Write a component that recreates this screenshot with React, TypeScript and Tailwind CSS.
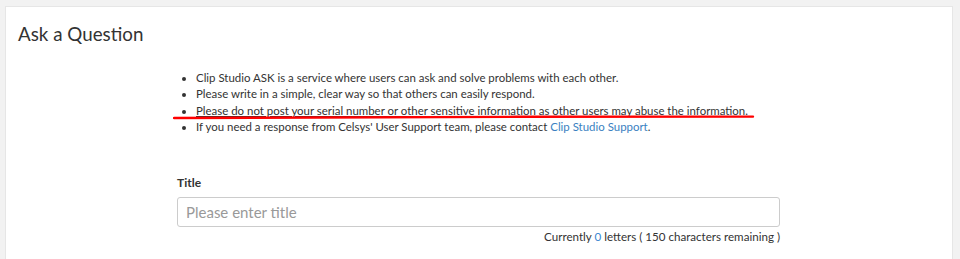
import React from 'react';

const items = [
  'Clip Studio ASK is a service where users can ask and solve problems with each other.',
  'Please write in a simple, clear way so that others can easily respond.',
];

export default function App() {
  return (
    <div className="min-h-[259px] bg-[#f2f2f2] pt-[6px] pl-[5px] pr-[7px] font-['Lato','Liberation_Sans',sans-serif] text-[#333]">
      <div className="h-[253px] border border-b-0 border-[#e6e6e6] bg-white pt-[14px] pl-[12px]">
        <h1 className="text-[18.8px] leading-[26px] text-[#333]">Ask a Question</h1>

        <div className="ml-[159px] mt-[23px] w-[603px]">
          <div className="relative">
            <ul className="list-disc pl-[19px] text-[11.45px] leading-[16.3px]">
              {items.map(t => (
                <li key={t}>{t}</li>
              ))}
              <li className="underline">
                Please do not post your serial number or other sensitive information as other users may abuse the information.
              </li>
              <li>
                If you need a response from Celsys' User Support team, please contact{' '}
                <a href="#" className="text-[#3a7fc1]">Clip Studio Support</a>.
              </li>
            </ul>
            <svg className="absolute left-[-4px] top-[44px]" width="582" height="6" viewBox="0 0 582 6">
              <path d="M1 4 C 120 3.4, 400 2.4, 580 2.6" stroke="#f00" strokeWidth="2.4" fill="none" strokeLinecap="round" />
            </svg>
          </div>

          <div className="mt-[40px]">
            <label className="block text-[12px] font-bold leading-[16px] text-[#333]">Title</label>
            <input
              type="text"
              placeholder="Please enter title"
              className="mt-[6px] h-[30px] w-full rounded-[3px] border border-[#ccc] px-[8px] text-[15px] text-[#333] outline-none placeholder:text-[#999]"
            />
            <p className="mt-[2px] text-right text-[11.6px] leading-[16px]">
              Currently <span className="text-[#3a87d0]">0</span> letters ( 150 characters remaining )
            </p>
          </div>
        </div>
      </div>
    </div>
  );
}
